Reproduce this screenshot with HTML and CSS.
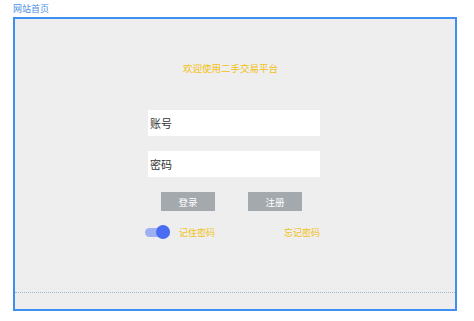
FILE: index.html
```html
<!DOCTYPE html>
<html lang="zh-CN">
<head>
    <meta charset="UTF-8">
    <meta name="viewport" content="width=device-width, initial-scale=1.0">
    <title>网站首页</title>
    <link rel="stylesheet" href="styles.css">
</head>
<body>
    <a href="#" class="home-link">网站首页</a>

    <div class="frame">
        <div class="login">
            <p class="welcome">欢迎使用二手交易平台</p>

            <div class="field">账号</div>
            <div class="field">密码</div>

            <div class="actions">
                <button class="btn">登录</button>
                <button class="btn">注册</button>
            </div>

            <div class="options">
                <label class="remember">
                    <span class="switch"><span class="knob"></span></span>
                    <span>记住密码</span>
                </label>
                <a href="#" class="forgot">忘记密码</a>
            </div>
        </div>

        <div class="footer"></div>
    </div>
</body>
</html>
```

FILE: styles.css
```css
body {
    margin: 0;
    background-color: #fff;
    font-family: "Noto Sans CJK SC", "Noto Sans", sans-serif;
}

.home-link {
    display: block;
    height: 17px;
    padding: 2px 0 0 13px;
    box-sizing: border-box;
    font-size: 9px;
    line-height: 13px;
    color: #4a90e2;
    text-decoration: none;
}

.frame {
    width: 444px;
    height: 294px;
    margin-left: 13px;
    box-sizing: border-box;
    border: 2px solid #3f8ef0;
    background-color: #eeeeee;
    display: flex;
    flex-direction: column;
}

.login {
    flex-grow: 1;
    width: 172px;
    margin-left: 133px;
    display: flex;
    flex-direction: column;
}

.welcome {
    margin: 43px 0 0 35px;
    font-size: 9.5px;
    line-height: 13px;
    color: #f2c114;
}

.field {
    height: 26px;
    margin-top: 35px;
    padding-left: 2px;
    background-color: #fff;
    font-size: 11px;
    line-height: 26px;
    color: #333;
}

.field + .field {
    margin-top: 15px;
}

.actions {
    display: flex;
    gap: 33px;
    margin: 15px 0 0 13px;
}

.btn {
    width: 54px;
    height: 19px;
    padding: 0;
    border: none;
    background-color: #a4a9ae;
    color: #fff;
    font-family: inherit;
    font-size: 9.5px;
}

.options {
    display: flex;
    justify-content: space-between;
    align-items: center;
    margin: 14px 0 0 -3px;
    height: 14px;
    font-size: 9px;
    color: #f2c114;
}

.remember {
    display: flex;
    align-items: center;
    gap: 9px;
}

.switch {
    position: relative;
    width: 25px;
    height: 9px;
    border-radius: 5px;
    background-color: #9eb0f2;
}

.knob {
    position: absolute;
    right: 0;
    top: -3px;
    width: 14px;
    height: 14px;
    border-radius: 50%;
    background-color: #4a6cf3;
}

.forgot {
    color: #f2c114;
    text-decoration: none;
}

.footer {
    height: 16px;
    border-top: 1px dotted #a3b6cf;
}
```
